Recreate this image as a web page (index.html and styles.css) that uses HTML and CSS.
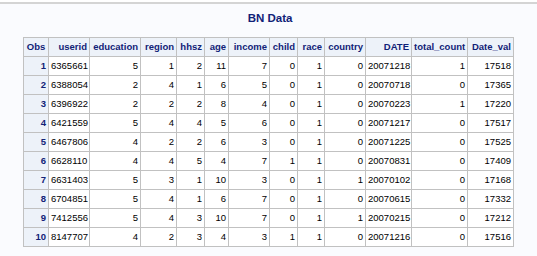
FILE: index.html
```html
<!DOCTYPE html>
<html lang="en">
<head>
    <meta charset="UTF-8">
    <title>BN Data</title>
    <link rel="stylesheet" href="styles.css">
</head>
<body>
    <div class="topbar"></div>
    <div class="page">
        <h2 class="title">BN Data</h2>
        <table class="data">
            <colgroup>
                <col class="c-obs">
                <col class="c-userid">
                <col class="c-education">
                <col class="c-region">
                <col class="c-hhsz">
                <col class="c-age">
                <col class="c-income">
                <col class="c-child">
                <col class="c-race">
                <col class="c-country">
                <col class="c-date">
                <col class="c-total">
                <col class="c-dateval">
            </colgroup>
            <thead>
                <tr>
                    <th class="center">Obs</th>
                    <th>userid</th>
                    <th>education</th>
                    <th>region</th>
                    <th>hhsz</th>
                    <th>age</th>
                    <th>income</th>
                    <th>child</th>
                    <th>race</th>
                    <th>country</th>
                    <th>DATE</th>
                    <th>total_count</th>
                    <th>Date_val</th>
                </tr>
            </thead>
            <tbody>
                <tr><th>1</th><td class="left">6365661</td><td>5</td><td>1</td><td>2</td><td>11</td><td>7</td><td>0</td><td>1</td><td>0</td><td class="left">20071218</td><td>1</td><td>17518</td></tr>
                <tr><th>2</th><td class="left">6388054</td><td>2</td><td>4</td><td>1</td><td>6</td><td>5</td><td>0</td><td>1</td><td>0</td><td class="left">20070718</td><td>0</td><td>17365</td></tr>
                <tr><th>3</th><td class="left">6396922</td><td>2</td><td>2</td><td>2</td><td>8</td><td>4</td><td>0</td><td>1</td><td>0</td><td class="left">20070223</td><td>1</td><td>17220</td></tr>
                <tr><th>4</th><td class="left">6421559</td><td>5</td><td>4</td><td>4</td><td>5</td><td>6</td><td>0</td><td>1</td><td>0</td><td class="left">20071217</td><td>0</td><td>17517</td></tr>
                <tr><th>5</th><td class="left">6467806</td><td>4</td><td>2</td><td>2</td><td>6</td><td>3</td><td>0</td><td>1</td><td>0</td><td class="left">20071225</td><td>0</td><td>17525</td></tr>
                <tr><th>6</th><td class="left">6628110</td><td>4</td><td>4</td><td>5</td><td>4</td><td>7</td><td>1</td><td>1</td><td>0</td><td class="left">20070831</td><td>0</td><td>17409</td></tr>
                <tr><th>7</th><td class="left">6631403</td><td>5</td><td>3</td><td>1</td><td>10</td><td>3</td><td>0</td><td>1</td><td>1</td><td class="left">20070102</td><td>0</td><td>17168</td></tr>
                <tr><th>8</th><td class="left">6704851</td><td>5</td><td>4</td><td>1</td><td>6</td><td>7</td><td>0</td><td>1</td><td>0</td><td class="left">20070615</td><td>0</td><td>17332</td></tr>
                <tr><th>9</th><td class="left">7412556</td><td>5</td><td>4</td><td>3</td><td>10</td><td>7</td><td>0</td><td>1</td><td>1</td><td class="left">20070215</td><td>0</td><td>17212</td></tr>
                <tr><th>10</th><td class="left">8147707</td><td>4</td><td>2</td><td>3</td><td>4</td><td>3</td><td>1</td><td>1</td><td>0</td><td class="left">20071216</td><td>0</td><td>17516</td></tr>
            </tbody>
        </table>
    </div>
</body>
</html>
```

FILE: styles.css
```css
html, body {
    margin: 0;
    padding: 0;
}
body {
    font-family: "Liberation Sans", Arial, sans-serif;
    background-color: #fafbfe;
    color: #000;
}
.topbar {
    height: 2px;
    background: #fff;
    border-bottom: 2px solid #d4d4d4;
}
.page {
    padding-top: 7px;
}
.title {
    margin: 0 0 11px 0;
    text-align: center;
    font-size: 11.5px;
    line-height: 15px;
    font-weight: bold;
    color: #112277;
    padding-left: 3px;
}
.data {
    margin: 0 auto;
    border-collapse: collapse;
    table-layout: fixed;
    width: 490px;
    border: 1px solid #c1c1c1;
    font-size: 9.5px;
}
.data th, .data td {
    border: 1px solid #c1c1c1;
    padding: 0 2px;
    height: 18px;
    line-height: 12px;
    text-align: right;
    white-space: nowrap;
    overflow: hidden;
}
.data th {
    background-color: #edf2f9;
    color: #112277;
    font-weight: bold;
}
.data td {
    background-color: #fff;
}
.data .center { text-align: center; }
.data .left { text-align: left; }

.c-obs { width: 25px; }
.c-userid { width: 41px; }
.c-education { width: 51px; }
.c-region { width: 36px; }
.c-hhsz { width: 28px; }
.c-age { width: 24px; }
.c-income { width: 41px; }
.c-child { width: 28px; }
.c-race { width: 27px; }
.c-country { width: 41px; }
.c-date { width: 46px; }
.c-total { width: 56px; }
.c-dateval { width: 46px; }
```
